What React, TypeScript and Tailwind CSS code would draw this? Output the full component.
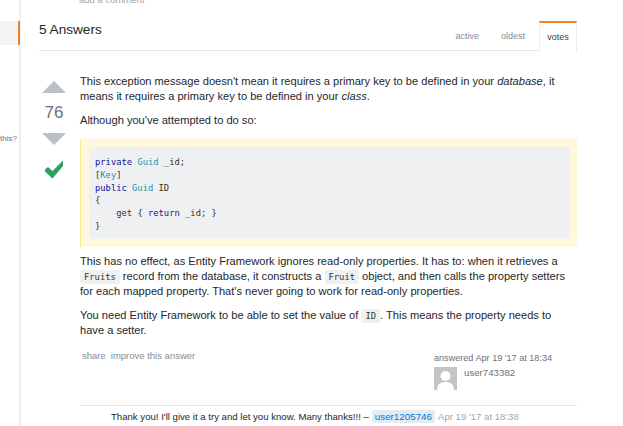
import React from 'react';

const Kw: React.FC<{ children: React.ReactNode }> = ({ children }) => <span className="text-[#101094]">{children}</span>;
const Ty: React.FC<{ children: React.ReactNode }> = ({ children }) => <span className="text-[#2b91af]">{children}</span>;
const Code: React.FC<{ children: React.ReactNode }> = ({ children }) => (
  <code className="bg-[#eff0f1] px-[4px] py-[2px] rounded-[1px] font-['DejaVu_Sans_Mono',monospace] text-[8.8px] leading-none text-[#393318]">{children}</code>
);

export default function App() {
  return (
    <div className="w-[623px] h-[426px] overflow-hidden flex bg-white font-['Liberation_Sans',sans-serif] text-[11.1px] leading-[14.7px] text-[#242729]">
      <div className="w-[21px] shrink-0 border-r-2 border-[#eeeeee] pt-[21px] flex flex-col">
        <div className="h-[24px] bg-[#f4f4f4] border-r-[2px] border-[#f48024] -mr-[1px]"></div>
        <div className="mt-[89px] text-[8px] leading-[10px] text-[#6a737c] text-right pr-[3px] whitespace-nowrap">this?</div>
      </div>

      <div className="w-[538px] ml-[18px] shrink-0 flex flex-col">
        <div className="h-[27px] -mt-[6px] pt-[1px] pl-[40px] text-[9.5px] leading-[10px] text-[#9fa6ad]">add a comment</div>
        <div className="h-[30px] border-b border-[#e4e6e8] flex items-start justify-between">
          <h2 className="text-[13.6px] leading-[18px] text-[#242729]">5 Answers</h2>
          <div className="flex items-stretch h-[30px] text-[9px] text-[#848d95]">
            <div className="flex items-center pt-[1px] pr-[22px]">active</div>
            <div className="flex items-center pt-[1px] pr-[14px]">oldest</div>
            <div className="w-[38px] -mb-[1px] bg-white border-t-2 border-x border-[#f48024] border-x-[#eeeeee] flex items-center justify-center text-[#3b4045]">votes</div>
          </div>
        </div>

        <div className="flex mt-[23px]">
          <div className="w-[41px] shrink-0 flex flex-col items-start">
            <svg width="30" height="14" viewBox="0 0 30 14" className="mt-[6px]"><path d="M3 13 L15 1 L27 13 Z" fill="#bbc0c4" /></svg>
            <div className="w-[30px] text-center text-[17px] leading-[22px] mt-[8px] text-[#6a737c]">76</div>
            <svg width="30" height="14" viewBox="0 0 30 14" className="mt-[8px]"><path d="M3 1 L27 1 L15 13 Z" fill="#bbc0c4" /></svg>
            <svg width="30" height="20" viewBox="0 0 30 20" className="mt-[14px]"><path d="M6 9.5 L9 7 L13.5 11 L24 0.5 L24 6 L13.5 18.5 L6 11.5 Z" fill="#2f9e5f" /></svg>
          </div>

          <div className="w-[497px]">
            <p>This exception message doesn't mean it requires a primary key to be defined in your <em>database</em>, it<br />means it requires a primary key to be defined in your <em>class</em>.</p>
            <p className="mt-[10px]">Although you've attempted to do so:</p>
            <div className="mt-[11px] bg-[#fff8dc] border-l border-[#fbe98f] pl-[8px] pr-[7px] py-[8px]">
              <pre className="bg-[#eff0f1] rounded-[1px] h-[92px] px-[6px] pt-[9px] font-['DejaVu_Sans_Mono',monospace] text-[8.8px] leading-[12.7px] text-[#393318]">
                <Kw>private</Kw> <Ty>Guid</Ty> _id;{'\n'}[<Ty>Key</Ty>]{'\n'}<Kw>public</Kw> <Ty>Guid</Ty> ID{'\n'}{'{'}{'\n'}{'    '}get {'{'} <Kw>return</Kw> _id; {'}'}{'\n'}{'}'}
              </pre>
            </div>
            <p className="mt-[7px]">This has no effect, as Entity Framework ignores read-only properties. It has to: when it retrieves a<br /><Code>Fruits</Code> record from the database, it constructs a <Code>Fruit</Code> object, and then calls the property setters<br />for each mapped property. That's never going to work for read-only properties.</p>
            <p className="mt-[10px]">You need Entity Framework to be able to set the value of <Code>ID</Code>. This means the property needs to<br />have a setter.</p>

            <div className="flex justify-between mt-[6px]">
              <div className="pl-[2px] pt-[6px] text-[9.5px] leading-[12px] text-[#848d95] flex gap-[5px]">
                <span>share</span>
                <span>improve this answer</span>
              </div>
              <div className="w-[143px] pt-[8px] text-[9.1px] leading-[12px] text-[#6a737c]">
                <div>answered Apr 19 '17 at 18:34</div>
                <div className="flex mt-[3px]">
                  <svg width="23" height="23" viewBox="0 0 23 23">
                    <rect width="23" height="23" fill="#c4c4c4" />
                    <circle cx="11.5" cy="9" r="5" fill="#fff" />
                    <path d="M3 23 C3 17 7 15 11.5 15 C16 15 20 17 20 23 Z" fill="#fff" />
                  </svg>
                  <span className="ml-[7px] text-[9.7px]">user743382</span>
                </div>
              </div>
            </div>

            <div className="mt-[15px] border-t border-[#e4e6e8] pl-[31px] pt-[4px] flex items-center whitespace-nowrap text-[9.6px] leading-[13px]">
              <span>Thank you! I'll give it a try and let you know. Many thanks!!! –</span>
              <span className="ml-[3px] bg-[#e1ecf4] text-[#07c] px-[3px] rounded-[1px] text-[9.8px]">user1205746</span>
              <span className="ml-[3px] text-[#9fa6ad] text-[9.6px]">Apr 19 '17 at 18:38</span>
            </div>
          </div>
        </div>
      </div>
    </div>
  );
}
